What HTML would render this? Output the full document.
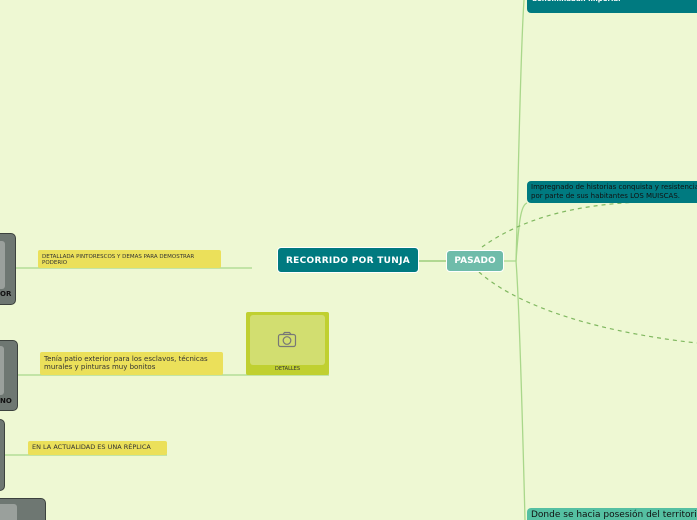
<!DOCTYPE html>
<html><head><style>
html,body{margin:0;width:697px;height:520px;overflow:hidden}
body{background:#eef8d3;position:relative;font-family:"DejaVu Sans","Liberation Sans",sans-serif}
.a{position:absolute;box-sizing:border-box}
.g{background:#6e7772;border:1px solid #3c423e;border-radius:5px}
.gi{background:#9aa09c;border-radius:3px}
.y{background:#ebe05a;border-radius:2px;color:#333;line-height:1.1}
.t{background:#007a80;color:#fff;border-radius:4px}
</style></head><body>
<svg class="a" style="left:0;top:0" width="697" height="520">
<g fill="none" stroke="#a9d78a" stroke-width="1.3">
<line x1="15" y1="268" x2="252" y2="268"/>
<line x1="17" y1="375" x2="329" y2="375"/>
<line x1="5" y1="455" x2="167" y2="455"/>
<line x1="419" y1="261" x2="446" y2="261" stroke="#8dc46c"/>
<path d="M504 261 H516 C518 200 520 60 524 0"/>
<path d="M516 261 C519 220 521 205 527 203"/>
<path d="M516 261 C519 300 522 400 525 520"/>
</g>
<g fill="none" stroke="#80b860" stroke-width="1.2" stroke-dasharray="4 4">
<path d="M482 247 C520 220 570 205 640 202"/>
<path d="M479 272 C510 300 580 330 697 343"/>
</g>
</svg>
<div class="a g" style="left:-20px;top:233px;width:36px;height:72px"></div>
<div class="a gi" style="left:-20px;top:241px;width:25px;height:48px"></div>
<div class="a" style="left:0;top:290px;font-size:7px;font-weight:bold;color:#111">OR</div>
<div class="a g" style="left:-20px;top:340px;width:38px;height:71px"></div>
<div class="a gi" style="left:-20px;top:346px;width:24px;height:49px"></div>
<div class="a" style="left:0;top:397px;font-size:7px;font-weight:bold;color:#111">NO</div>
<div class="a g" style="left:-20px;top:419px;width:25px;height:72px"></div>
<div class="a g" style="left:-20px;top:498px;width:66px;height:40px"></div>
<div class="a gi" style="left:-20px;top:504px;width:37px;height:30px"></div>
<div class="a y" style="left:38px;top:250px;width:183px;height:18px;font-size:5.5px;padding:4px 4px">DETALLADA PINTORESCOS Y DEMAS PARA DEMOSTRAR PODERIO</div>
<div class="a y" style="left:40px;top:352px;width:183px;height:23px;font-size:7px;padding:4px 4px">Tenía patio exterior para los esclavos, técnicas murales y pinturas muy bonitos</div>
<div class="a y" style="left:28px;top:441px;width:139px;height:14px;font-size:6.5px;padding:3px 4px">EN LA ACTUALIDAD ES UNA RÉPLICA</div>
<div class="a" style="left:246px;top:312px;width:83px;height:63px;background:#c0d030;border-radius:2px"></div>
<div class="a" style="left:250px;top:315px;width:75px;height:50px;background:#d2de70;border-radius:3px"></div>
<svg class="a" style="left:277px;top:331px" width="20" height="17"><rect x="1.5" y="3.5" width="17" height="12" rx="2" fill="none" stroke="#777" stroke-width="1.2"/><circle cx="10" cy="9.5" r="3.8" fill="none" stroke="#777" stroke-width="1.2"/><path d="M6 3.5 L7.5 1.5 H12.5 L14 3.5" fill="none" stroke="#777" stroke-width="1.2"/></svg>
<div class="a" style="left:246px;top:366px;width:83px;text-align:center;font-size:5px;color:#333">DETALLES</div>
<div class="a t" style="left:277px;top:247px;width:142px;height:26px;font-size:9px;font-weight:bold;text-align:center;line-height:26px;border:1px solid #fff;letter-spacing:.3px">RECORRIDO POR TUNJA</div>
<div class="a" style="left:446px;top:250px;width:58px;height:22px;background:#6fbcaa;border:1px solid #fff;border-radius:4px;color:#fff;font-size:9px;font-weight:bold;text-align:center;line-height:20px">PASADO</div>
<div class="a t" style="left:527px;top:-8px;width:180px;height:21px;font-size:7px;font-weight:bold;padding:3px 5px">denominaban imperial</div>
<div class="a t" style="left:527px;top:181px;width:180px;height:22px;font-size:7px;color:#111;padding:2px 4px;line-height:1.3;white-space:nowrap">Impregnado de historias conquista y resistencia<br>por parte de sus habitantes LOS MUISCAS.</div>
<div class="a" style="left:527px;top:508px;width:180px;height:20px;background:#55c0a2;border-radius:4px;font-size:9px;color:#111;padding:2px 4px;white-space:nowrap">Donde se hacia posesión del territorio</div>
</body></html>
